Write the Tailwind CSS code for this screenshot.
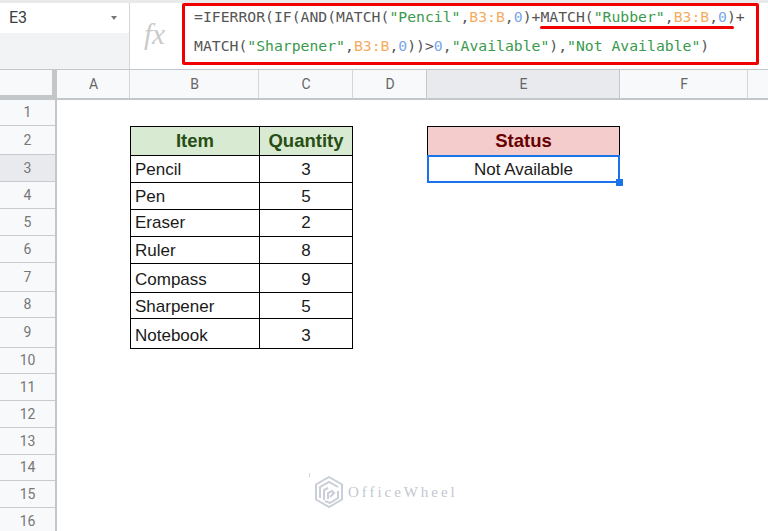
<!DOCTYPE html>
<html>
<head>
<meta charset="utf-8">
<script src="https://cdn.jsdelivr.net/npm/@tailwindcss/browser@4"></script>
</head>
<body class="bg-white">
<div class="w-[768px] h-[531px] overflow-hidden relative bg-white font-['Roboto','Liberation_Sans',sans-serif]">
  <!-- formula bar -->
  <div class="flex h-[70px] border-t-[3px] border-[#e9eaec] border-b border-b-[#c4c7c9] box-border">
    <div class="w-[130px] flex flex-col border-r border-[#d4d6d8]">
      <div class="h-[30px] flex items-center justify-between bg-white pl-[9px] pr-[12px] text-[16px] text-[#3c4043]">
        <span>E3</span>
        <span class="w-0 h-0 border-x-[3.5px] border-x-transparent border-t-[4px] border-t-[#777]"></span>
      </div>
      <div class="flex-1 bg-[#f1f3f4]"></div>
    </div>
    <div class="w-[52px] flex items-center justify-center pr-[3px] pb-[2px]">
      <span class="font-['Liberation_Serif',serif] italic text-[29px] text-[#c9cbca]">fx</span>
    </div>
    <div class="w-[577px] h-[62px] border-[3px] border-[#f00000] rounded-[2px] pl-[9px] font-['DejaVu_Sans_Mono',monospace] text-[14.75px] leading-[29px] text-[#555] whitespace-nowrap">
      <div class="mt-[-4px]">=IFERROR(IF(AND(MATCH(<span class="text-[#3a9a4d]">"Pencil"</span>,<span class="text-[#f6ad5f]">B3:B</span>,<span class="text-[#7aa7ea]">0</span>)+<span class="relative">MATCH(<span class="text-[#3a9a4d]">"Rubber"</span>,<span class="text-[#f6ad5f]">B3:B</span>,<span class="text-[#7aa7ea]">0</span><span class="absolute left-0 right-[-7px] bottom-[-4px] h-[3px] bg-[#f00000] rounded-full"></span></span>)+</div>
      <div>MATCH(<span class="text-[#3a9a4d]">"Sharpener"</span>,<span class="text-[#f6ad5f]">B3:B</span>,<span class="text-[#7aa7ea]">0</span>))&gt;<span class="text-[#7aa7ea]">0</span>,<span class="text-[#3a9a4d]">"Available"</span>),<span class="text-[#3a9a4d]">"Not Available"</span>)</div>
    </div>
  </div>
  <!-- column headers -->
  <div class="flex h-[30px] bg-[#f8f9fa] text-[14px] text-[#666] border-b-2 border-[#c4c7c9] box-border">
    <div class="w-[57px] border-r-[5px] border-b-[3px] border-[#c4c7c9] h-[28px] box-border"></div>
    <div class="w-[73px] flex items-center justify-center pl-[1px] border-r border-[#d4d6d8]">A</div>
    <div class="w-[129px] flex items-center justify-center pl-[1px] border-r border-[#d4d6d8]">B</div>
    <div class="w-[94px] flex items-center justify-center pl-[1px] border-r border-[#d4d6d8]">C</div>
    <div class="w-[74px] flex items-center justify-center pl-[1px] border-r border-[#c4c7c9]">D</div>
    <div class="w-[193px] flex items-center justify-center pl-[1px] border-r border-[#c4c7c9] bg-[#e8eaed]">E</div>
    <div class="w-[128px] flex items-center justify-center pl-[1px] border-r border-[#d4d6d8]">F</div>
  </div>
  <div class="flex">
    <!-- row headers -->
    <div class="w-[57px] shrink-0 flex flex-col bg-[#f8f9fa] border-r-2 border-[#c4c7c9] text-[14px] text-[#777] text-center">
      <div class="h-[26px] flex items-center justify-center border-b border-[#c8cacc]">1</div>
      <div class="h-[29px] flex items-center justify-center border-b border-[#c8cacc]">2</div>
      <div class="h-[27px] flex items-center justify-center border-b border-[#c8cacc] bg-[#e8eaed]">3</div>
      <div class="h-[27px] flex items-center justify-center border-b border-[#c8cacc]">4</div>
      <div class="h-[27px] flex items-center justify-center border-b border-[#c8cacc]">5</div>
      <div class="h-[27px] flex items-center justify-center border-b border-[#c8cacc]">6</div>
      <div class="h-[29px] flex items-center justify-center border-b border-[#c8cacc]">7</div>
      <div class="h-[26px] flex items-center justify-center border-b border-[#c8cacc]">8</div>
      <div class="h-[30px] flex items-center justify-center border-b border-[#c8cacc]">9</div>
      <div class="h-[26px] flex items-center justify-center border-b border-[#c8cacc]">10</div>
      <div class="h-[27px] flex items-center justify-center border-b border-[#c8cacc]">11</div>
      <div class="h-[27px] flex items-center justify-center border-b border-[#c8cacc]">12</div>
      <div class="h-[27px] flex items-center justify-center border-b border-[#c8cacc]">13</div>
      <div class="h-[26px] flex items-center justify-center border-b border-[#c8cacc]">14</div>
      <div class="h-[27px] flex items-center justify-center border-b border-[#c8cacc]">15</div>
      <div class="h-[27px] flex items-center justify-center">16</div>
    </div>
    <!-- sheet content -->
    <div class="flex items-start pl-[73px] pt-[26px] font-['Liberation_Sans',sans-serif] text-[17px] text-[#1a1a1a]">
      <div class="w-[223px] grid grid-cols-[129px_93px] grid-rows-[29px_27px_27px_27px_27px_29px_26px_30px] border-l border-t border-black box-border">
        <div class="bg-[#d9ead3] border-r border-b border-black flex items-center justify-center font-bold text-[18.5px] text-[#274e13]">Item</div>
        <div class="bg-[#d9ead3] border-r border-b border-black flex items-center justify-center font-bold text-[18.5px] text-[#274e13]">Quantity</div>
        <div class="border-r border-b border-black flex items-center pl-[4px] pt-[2px]">Pencil</div><div class="border-r border-b border-black flex items-center justify-center pt-[2px]">3</div>
        <div class="border-r border-b border-black flex items-center pl-[4px] pt-[2px]">Pen</div><div class="border-r border-b border-black flex items-center justify-center pt-[2px]">5</div>
        <div class="border-r border-b border-black flex items-center pl-[4px]">Eraser</div><div class="border-r border-b border-black flex items-center justify-center">2</div>
        <div class="border-r border-b border-black flex items-center pl-[4px] pt-[2px]">Ruler</div><div class="border-r border-b border-black flex items-center justify-center pt-[2px]">8</div>
        <div class="border-r border-b border-black flex items-center pl-[4px] pt-[4px]">Compass</div><div class="border-r border-b border-black flex items-center justify-center pt-[4px]">9</div>
        <div class="border-r border-b border-black flex items-center pl-[4px] pt-[2px]">Sharpener</div><div class="border-r border-b border-black flex items-center justify-center pt-[2px]">5</div>
        <div class="border-r border-b border-black flex items-center pl-[4px] pt-[4px]">Notebook</div><div class="border-r border-b border-black flex items-center justify-center pt-[4px]">3</div>
      </div>
      <div class="ml-[74px] w-[193px]">
        <div class="h-[30px] bg-[#f4cccc] border border-black flex items-center justify-center font-bold text-[18.5px] text-[#660000]">Status</div>
        <div class="relative h-[28px] border-2 border-[#1a73e8] mt-[-1px] pt-[2px] flex items-center justify-center">
          Not Available
          <span class="absolute right-[-5px] bottom-[-5px] w-[7px] h-[7px] bg-[#1a73e8]"></span>
        </div>
      </div>
    </div>
  </div>
  <!-- watermark -->
  <div class="absolute left-[313px] top-[476px] flex items-center gap-[3px] opacity-70">
    <svg width="32" height="32" viewBox="0 0 32 32" fill="none" stroke="#b3bac8" stroke-width="2">
      <path d="M16 1 L29 8.5 V23.5 L16 31 L3 23.5 V8.5 Z"/>
      <path d="M7 22 V11 L16 6 L25 11"/>
      <path d="M11 24 V14 L15 12 M25 15 V22 L17 27 L12 25"/>
      <path d="M15 23 V17 L19 15 L21 17 L17 21"/>
    </svg>
    <span class="font-['Liberation_Serif',serif] text-[15px] tracking-[2.95px] text-[#a9afbd]">OfficeWheel</span>
  </div>
  <div class="absolute left-[309px] top-[473px] w-[1px] h-[4px] bg-[#d5d5d5]"></div>
</div>
</body>
</html>
